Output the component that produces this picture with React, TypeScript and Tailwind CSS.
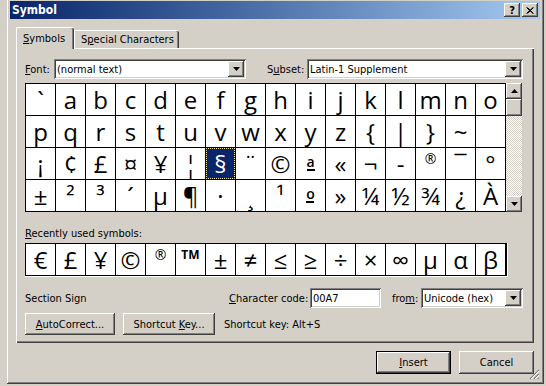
import React from "react";

const ui = "font-['DejaVu_Sans_Condensed','Liberation_Sans',sans-serif] text-[11px] leading-[13px] text-black";
const raised =
  "bg-[#d4d0c8] shadow-[inset_-1px_-1px_#404040,inset_1px_1px_#ffffff,inset_-2px_-2px_#808080,inset_2px_2px_#d4d0c8]";
const sunken =
  "shadow-[inset_1px_1px_#808080,inset_-1px_-1px_#ffffff,inset_2px_2px_#404040,inset_-2px_-2px_#d4d0c8]";

const rows: string[][] = [
  ["`", "a", "b", "c", "d", "e", "f", "g", "h", "i", "j", "k", "l", "m", "n", "o"],
  ["p", "q", "r", "s", "t", "u", "v", "w", "x", "y", "z", "{", "|", "}", "~", ""],
  ["¡", "¢", "£", "¤", "¥", "¦", "§", "¨", "©", "ª", "«", "¬", "-", "®", "¯", "°"],
  ["±", "²", "³", "´", "µ", "¶", "·", "¸", "¹", "º", "»", "¼", "½", "¾", "¿", "À"],
];
const recent = ["€", "£", "¥", "©", "®", "™", "±", "≠", "≤", "≥", "÷", "×", "∞", "µ", "α", "β"];

function Glyph({ c }: { c: string }) {
  if (c === "®") return <span className="text-[14px] mb-[10px]">®</span>;
  if (c === "™") return <span className="text-[12px] font-bold mb-[10px]">TM</span>;
  if (c === "ª" || c === "º")
    return (
      <span className="flex flex-col items-center">
        <span className="text-[14px] leading-[10px] font-semibold" aria-label={c}>
          {c === "ª" ? "a" : "o"}
        </span>
        <span className="mt-[2px] w-[8px] h-[2px] bg-black" />
      </span>
    );
  return <>{c}</>;
}

function Arrow({ dir = "down" }: { dir?: "down" | "up" }) {
  return (
    <svg width="7" height="4" viewBox="0 0 7 4">
      {dir === "down" ? <polygon points="0,0 7,0 3.5,4" fill="#000" /> : <polygon points="0,4 7,4 3.5,0" fill="#000" />}
    </svg>
  );
}

function Combo({ value, w }: { value: string; w: string }) {
  return (
    <div className={`${w} h-[20px] bg-white ${sunken} p-[2px] flex`}>
      <div className="flex-1 pl-[1px] flex items-center whitespace-nowrap overflow-hidden">{value}</div>
      <div className={`w-[16px] h-[16px] ${raised} flex items-center justify-center`}>
        <Arrow />
      </div>
    </div>
  );
}

function Btn({ children, w }: { children: React.ReactNode; w: string }) {
  return <div className={`${w} h-[22px] ${raised} flex items-center justify-center whitespace-nowrap`}>{children}</div>;
}

export default function App() {
  return (
    <div className={`w-[546px] h-[386px] bg-[#d4d0c8] overflow-hidden ${ui}`}>
      <div className="relative ml-[6px] mt-[-3px] w-[538px] h-[387px] bg-[#d4d0c8] shadow-[inset_1px_1px_#d4d0c8,inset_-1px_-1px_#404040,inset_2px_2px_#ffffff,inset_-2px_-2px_#808080] p-[4px] flex flex-col">
        {/* Title bar */}
        <div className="h-[18px] bg-gradient-to-r from-[#0a246a] to-[#a6caf0] flex items-center pl-[2px] pr-[2px]">
          <div className="flex-1 text-white font-bold text-[12px] font-['DejaVu_Sans_Condensed','Liberation_Sans',sans-serif]">Symbol</div>
          <div className={`w-[16px] h-[14px] ${raised} flex items-center justify-center font-bold text-[11px] leading-none`}>?</div>
          <div className={`ml-[2px] w-[16px] h-[14px] ${raised} flex items-center justify-center`}>
            <svg width="8" height="7" viewBox="0 0 8 7">
              <path d="M0.5 0.5 L7 6.5 M1.5 0.5 L7.5 6.5 M7 0.5 L0.5 6.5 M7.5 0.5 L1.5 6.5" stroke="#000" strokeWidth="1" />
            </svg>
          </div>
        </div>

        {/* Tabs */}
        <div className="mt-[8px] ml-[6px] h-[21px] flex">
          <div className="relative z-10 w-[58px] h-[22px] bg-[#d4d0c8] border-l border-t border-white rounded-tl-[2px] rounded-tr-[2px] shadow-[inset_-1px_0_#404040,inset_-2px_0_#808080] pl-[6px] pt-[4px]">
            <u>S</u>ymbols
          </div>
          <div className="self-end w-[105px] h-[18px] bg-[#d4d0c8] border-l border-t border-white rounded-tr-[2px] shadow-[inset_-1px_0_#404040,inset_-2px_0_#808080] pl-[6px] pt-[2px] whitespace-nowrap">
            S<u>p</u>ecial Characters
          </div>
        </div>

        {/* Panel */}
        <div className="ml-[6px] w-[518px] h-[295px] bg-[#d4d0c8] shadow-[inset_1px_1px_#ffffff,inset_-1px_-1px_#404040,inset_-2px_-2px_#808080] pt-[11px] pl-[9px] flex flex-col">
          <div className="h-[20px] flex items-center">
            <div className="w-[29px]">
              <u>F</u>ont:
            </div>
            <Combo value="(normal text)" w="w-[192px]" />
            <div className="ml-[21px] w-[40px]">
              S<u>u</u>bset:
            </div>
            <Combo value="Latin-1 Supplement" w="w-[216px]" />
          </div>

          {/* Symbol grid */}
          <div className="mt-[4px] flex">
            <div className="grid grid-cols-[repeat(16,29px)] grid-rows-[repeat(4,31px)] gap-px bg-black p-px font-['Open_Sans','DejaVu_Sans',sans-serif] text-[24px] leading-none">
              {rows.flat().map((c, i) =>
                i === 38 ? (
                  <div key={i} className="bg-[#0a246a] text-white flex items-center justify-center border border-dotted border-[#e8dca0]">
                    {c}
                  </div>
                ) : (
                  <div key={i} className="bg-white flex items-center justify-center">
                    <Glyph c={c} />
                  </div>
                )
              )}
            </div>
            <div className="w-[16px] h-[129px] flex flex-col">
              <div className={`h-[16px] ${raised} flex items-center justify-center`}>
                <Arrow dir="up" />
              </div>
              <div className={`h-[17px] ${raised}`} />
              <div className="flex-1 bg-[repeating-conic-gradient(#ffffff_0_25%,#d4d0c8_0_50%)] bg-[length:2px_2px]" />
              <div className={`h-[16px] ${raised} flex items-center justify-center`}>
                <Arrow />
              </div>
            </div>
          </div>

          <div className="mt-[15px]">
            <u>R</u>ecently used symbols:
          </div>
          <div className="mt-[3px] w-[483px] border-r border-b border-white">
            <div className="grid grid-cols-[repeat(16,29px)] grid-rows-[31px] gap-px bg-black p-px font-['Open_Sans','DejaVu_Sans',sans-serif] text-[24px] leading-none">
              {recent.map((c, i) => (
                <div key={i} className="bg-white flex items-center justify-center">
                  <Glyph c={c} />
                </div>
              ))}
            </div>
          </div>

          <div className="mt-[11px] h-[20px] flex items-center">
            <div className="w-[204px]">Section Sign</div>
            <div className="w-[81px] whitespace-nowrap">
              <u>C</u>haracter code:
            </div>
            <div className={`w-[71px] h-[20px] bg-white ${sunken} pl-[3px] flex items-center`}>00A7</div>
            <div className="ml-[11px] w-[29px]">
              fro<u>m</u>:
            </div>
            <Combo value="Unicode (hex)" w="w-[102px]" />
          </div>

          <div className="mt-[5px] flex items-center">
            <Btn w="w-[90px]">
              <span>
                <u>A</u>utoCorrect...
              </span>
            </Btn>
            <div className="ml-[8px]">
              <Btn w="w-[92px]">
                <span>
                  Shortcut <u>K</u>ey...
                </span>
              </Btn>
            </div>
            <div className="ml-[9px]">Shortcut key: Alt+S</div>
          </div>
        </div>

        {/* Bottom buttons */}
        <div className="mt-[8px] flex justify-end pr-[6px]">
          <div className="w-[75px] h-[23px] border border-black">
            <div className={`w-full h-full ${raised} flex items-center justify-center`}>
              <span>
                <u>I</u>nsert
              </span>
            </div>
          </div>
          <div className={`ml-[8px] w-[75px] h-[23px] ${raised} flex items-center justify-center`}>Cancel</div>
        </div>

        {/* size grip */}
        <svg className="absolute right-[4px] bottom-[4px]" width="11" height="11" viewBox="0 0 11 11">
          <path d="M10 1 L1 10 M10 5 L5 10 M10 9 L9 10" stroke="#808080" strokeWidth="1.2" />
          <path d="M10 2 L2 10 M10 6 L6 10" stroke="#ffffff" strokeWidth="1" />
        </svg>
      </div>
    </div>
  );
}
